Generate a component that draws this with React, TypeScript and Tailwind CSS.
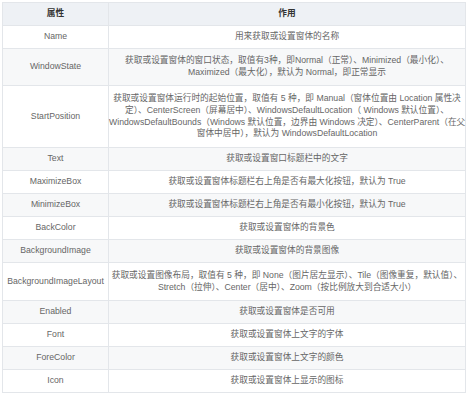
import React from "react";

type Row = { name: string; lines: string[]; h: number };

const rows: Row[] = [
  { name: "Name", lines: ["用来获取或设置窗体的名称"], h: 23 },
  {
    name: "WindowState",
    lines: [
      "获取或设置窗体的窗口状态，取值有3种，即Normal（正常）、Minimized（最小化）、",
      "Maximized（最大化），默认为 Normal，即正常显示",
    ],
    h: 37,
  },
  {
    name: "StartPosition",
    lines: [
      "获取或设置窗体运行时的起始位置，取值有 5 种，即 Manual（窗体位置由 Location 属性决",
      "定）、CenterScreen（屏幕居中）、WindowsDefaultLocation（ Windows 默认位置）、",
      "WindowsDefaultBounds（Windows 默认位置，边界由 Windows 决定）、CenterParent（在父",
      "窗体中居中），默认为 WindowsDefaultLocation",
    ],
    h: 62,
  },
  { name: "Text", lines: ["获取或设置窗口标题栏中的文字"], h: 23 },
  { name: "MaximizeBox", lines: ["获取或设置窗体标题栏右上角是否有最大化按钮，默认为 True"], h: 23 },
  { name: "MinimizeBox", lines: ["获取或设置窗体标题栏右上角是否有最小化按钮，默认为 True"], h: 23 },
  { name: "BackColor", lines: ["获取或设置窗体的背景色"], h: 23 },
  { name: "BackgroundImage", lines: ["获取或设置窗体的背景图像"], h: 23 },
  {
    name: "BackgroundImageLayout",
    lines: [
      "获取或设置图像布局，取值有 5 种，即 None（图片居左显示）、Tile（图像重复，默认值）、",
      "Stretch（拉伸）、Center（居中）、Zoom（按比例放大到合适大小）",
    ],
    h: 38,
  },
  { name: "Enabled", lines: ["获取或设置窗体是否可用"], h: 23 },
  { name: "Font", lines: ["获取或设置窗体上文字的字体"], h: 23 },
  { name: "ForeColor", lines: ["获取或设置窗体上文字的颜色"], h: 23 },
  { name: "Icon", lines: ["获取或设置窗体上显示的图标"], h: 23 },
];

export default function App() {
  return (
    <div
      className="w-[474px] h-[394px] bg-white pt-[2px] pl-[2px]"
      style={{ fontFamily: '"Liberation Sans", "Noto Sans CJK SC", sans-serif' }}
    >
      <table className="border-collapse w-[464px] table-fixed text-[8.7px] leading-[11.7px] text-[#666]">
        <colgroup>
          <col className="w-[106px]" />
          <col />
        </colgroup>
        <thead>
          <tr className="h-[23px] bg-[#eef1f5]">
            <th className="border border-[#e3e6ea] font-bold text-[#333] text-center p-0">属性</th>
            <th className="border border-[#e3e6ea] font-bold text-[#333] text-center p-0">作用</th>
          </tr>
        </thead>
        <tbody>
          {rows.map((r, i) => (
            <tr
              key={r.name}
              className={i % 2 === 1 ? "bg-[#f7f8f9]" : "bg-white"}
              style={{ height: r.h }}
            >
              <td className="border border-[#e3e6ea] text-center p-0 whitespace-nowrap">{r.name}</td>
              <td className="border border-[#e3e6ea] text-center p-0">
                {r.lines.map((l, j) => (
                  <div key={j} className="whitespace-nowrap">
                    {l}
                  </div>
                ))}
              </td>
            </tr>
          ))}
        </tbody>
      </table>
    </div>
  );
}
